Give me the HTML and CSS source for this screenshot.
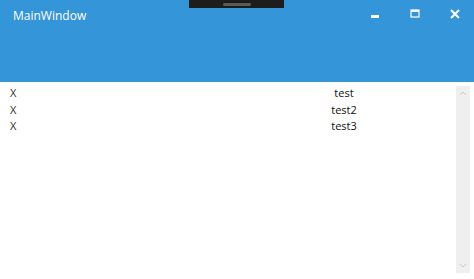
FILE: index.html
```html
<!DOCTYPE html>
<html>
<head>
<meta charset="utf-8">
<link rel="stylesheet" href="styles.css">
</head>
<body>
<div class="window">
  <header class="titlebar">
    <div class="title">MainWindow</div>
    <div class="notch"><span class="pill"></span></div>
    <div class="controls">
      <span class="btn">
        <svg width="10" height="10" viewBox="0 0 10 10"><rect x="1" y="6" width="8" height="3" fill="#fff"/></svg>
      </span>
      <span class="btn">
        <svg width="10" height="10" viewBox="0 0 10 10"><rect x="1" y="1" width="8" height="7" fill="none" stroke="#fff" stroke-width="1.2"/><rect x="1" y="1" width="8" height="2" fill="#fff"/></svg>
      </span>
      <span class="btn">
        <svg width="10" height="10" viewBox="0 0 10 10"><path d="M1 1L9 9M9 1L1 9" stroke="#fff" stroke-width="2"/></svg>
      </span>
    </div>
  </header>
  <div class="content">
    <div class="list">
      <div class="row"><span class="c1">X</span><span class="c2">test</span></div>
      <div class="row"><span class="c1">X</span><span class="c2">test2</span></div>
      <div class="row"><span class="c1">X</span><span class="c2">test3</span></div>
    </div>
    <div class="scrollbar">
      <svg class="arrow" width="8" height="6" viewBox="0 0 8 6"><path d="M1 5L4 2L7 5" fill="none" stroke="#c8c8c8" stroke-width="1"/></svg>
      <svg class="arrow" width="8" height="6" viewBox="0 0 8 6"><path d="M1 1L4 4L7 1" fill="none" stroke="#c8c8c8" stroke-width="1"/></svg>
    </div>
  </div>
</div>
</body>
</html>
```

FILE: styles.css
```css
html, body {
  margin: 0;
  padding: 0;
  background: #fff;
}
.window {
  width: 474px;
  height: 279px;
  display: flex;
  flex-direction: column;
  font-family: "Open Sans", "Noto Sans", sans-serif;
}
.titlebar {
  height: 82px;
  background: #3595d9;
  position: relative;
  display: flex;
  align-items: flex-start;
  justify-content: space-between;
}
.title {
  color: #fff;
  font-size: 12px;
  padding: 7px 0 0 13px;
  line-height: 18px;
}
.notch {
  position: absolute;
  left: 189px;
  top: 0;
  width: 95px;
  height: 8px;
  background: #1d1d1d;
  display: flex;
  justify-content: center;
  align-items: center;
}
.pill {
  width: 28px;
  height: 3px;
  background: #5a5a5a;
  border-radius: 2px;
}
.controls {
  display: flex;
  padding: 9px 14px 0 0;
  gap: 30px;
}
.btn {
  width: 10px;
  height: 10px;
  display: flex;
}
.content {
  flex: 1;
  display: flex;
  padding-top: 2px;
}
.list {
  flex: 1;
  padding-top: 1px;
}
.row {
  display: flex;
  height: 16.5px;
  line-height: 16px;
  font-size: 11px;
  color: #111;
}
.c1 {
  width: 100px;
  padding-left: 10px;
  color: #333;
}
.c2 {
  margin-left: 184px;
  width: 100px;
  text-align: center;
}
.scrollbar {
  width: 14px;
  margin: 2px 4px 6px 0;
  background: #efefef;
  display: flex;
  flex-direction: column;
  justify-content: space-between;
  align-items: center;
  padding: 4px 0;
}
.arrow { display: block; }
```
